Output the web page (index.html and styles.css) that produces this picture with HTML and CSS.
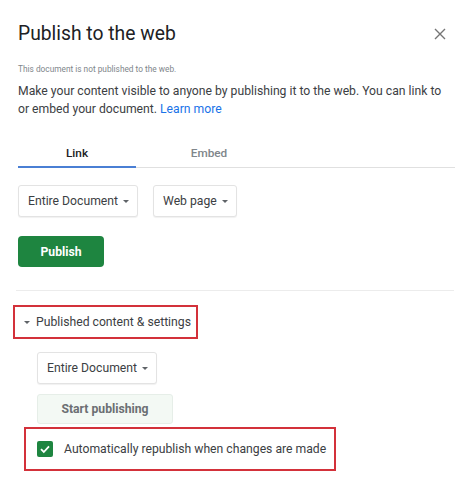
FILE: index.html
```html
<!DOCTYPE html>
<html lang="en">
<head>
<meta charset="utf-8">
<title>Publish to the web</title>
<link rel="stylesheet" href="styles.css">
</head>
<body>
<div class="dialog">
  <div class="header">
    <h1 class="title">Publish to the web</h1>
    <button class="close" aria-label="Close">
      <svg width="12" height="12" viewBox="0 0 12 12"><path d="M1 1L11 11M11 1L1 11" stroke="#757575" stroke-width="1.4" fill="none"/></svg>
    </button>
  </div>
  <p class="notice">This document is not published to the web.</p>
  <p class="intro">Make your content visible to anyone by publishing it to the web. You can link to or embed your document. <a class="link" href="#">Learn more</a></p>

  <div class="tabs">
    <div class="tab active">Link</div>
    <div class="tab wide">Embed</div>
  </div>

  <div class="selects">
    <div class="select">Entire Document <span class="caret"></span></div>
    <div class="select">Web page <span class="caret"></span></div>
  </div>

  <button class="publish">Publish</button>

  <div class="divider"></div>

  <div class="section-toggle"><span class="caret small"></span>Published content &amp; settings</div>

  <div class="settings">
    <div class="select">Entire Document <span class="caret"></span></div>
    <button class="start">Start publishing</button>
  </div>

  <div class="auto">
    <span class="checkbox">
      <svg width="12" height="12" viewBox="0 0 12 12"><path d="M2 6.2L4.8 9L10 3.4" stroke="#fff" stroke-width="1.8" fill="none"/></svg>
    </span>
    <span class="auto-label">Automatically republish when changes are made</span>
  </div>
</div>
</body>
</html>
```

FILE: styles.css
```css
* { box-sizing: border-box; }
body {
  margin: 0;
  background: #fff;
  font-family: Roboto, "Liberation Sans", Arial, sans-serif;
  color: #3c4043;
}
.dialog {
  width: 474px;
  padding: 22px 19px 0 18px;
}
.header {
  display: flex;
  justify-content: space-between;
  align-items: center;
  height: 24px;
}
.title {
  margin: 0;
  font-size: 19.3px;
  font-weight: 400;
  color: #202124;
  line-height: 24px;
}
.close {
  border: 0;
  background: none;
  padding: 0;
  margin-right: 9px;
  width: 12px;
  height: 12px;
  display: flex;
}
.notice {
  margin: 18px 0 0;
  font-size: 8.3px;
  line-height: 10px;
  color: #80868b;
}
.intro {
  margin: 8px 0 0;
  font-size: 12.2px;
  line-height: 18px;
  color: #3c4043;
}
.link { color: #1a73e8; text-decoration: none; }
.tabs {
  display: flex;
  margin-top: 21px;
  border-bottom: 1px solid #e0e0e0;
  width: 437px;
}
.tab {
  width: 118px;
  text-align: center;
  font-size: 11.8px;
  font-weight: 500;
  color: #80868b;
  padding: 7px 0 6px;
  line-height: 14px;
  margin-bottom: -1px;
  border-bottom: 2px solid transparent;
}
.tab.wide { width: 146px; }
.tab.active {
  color: #202124;
  border-bottom-color: #4a7fd4;
}
.selects {
  display: flex;
  gap: 15px;
  margin-top: 17px;
}
.select {
  display: inline-flex;
  align-items: center;
  height: 32px;
  padding: 0 8px 0 9px;
  border: 1px solid #e3e3e3;
  border-radius: 3px;
  box-shadow: 0 1px 1px rgba(0,0,0,0.06);
  font-size: 12.2px;
  color: #3c4043;
  background: #fff;
}
.caret {
  display: inline-block;
  width: 0;
  height: 0;
  border-left: 3.5px solid transparent;
  border-right: 3.5px solid transparent;
  border-top: 3.5px solid #5f6368;
  margin-left: 5px;
}
.caret.small {
  margin: 0 6px 0 3px;
  border-left-width: 3px;
  border-right-width: 3px;
  border-top-width: 3px;
}
.publish {
  display: block;
  margin-top: 19px;
  width: 86px;
  height: 31px;
  border: 0;
  border-radius: 4px;
  background: #1e8540;
  color: #fff;
  font-family: inherit;
  font-size: 12.2px;
  font-weight: 700;
}
.divider {
  margin-top: 23px;
  height: 1px;
  background: #ececec;
  width: 438px;
  margin-left: -2px;
}
.section-toggle {
  display: inline-flex;
  align-items: center;
  margin-top: 14px;
  margin-left: -5px;
  height: 34px;
  padding: 0 5px 0 6px;
  border: 2px solid #d3313a;
  font-size: 12.2px;
  color: #3c4043;
}
.settings {
  display: flex;
  flex-direction: column;
  align-items: flex-start;
  gap: 10px;
  margin: 13px 0 0 19px;
}
.start {
  width: 136px;
  height: 30px;
  border: 1px solid #e6eee8;
  border-radius: 3px;
  background: #f3f9f4;
  color: #6b6f73;
  font-family: inherit;
  font-size: 12.2px;
  font-weight: 700;
}
.auto {
  display: flex;
  align-items: center;
  margin: 3px 0 0 6px;
  width: 312px;
  height: 44px;
  border: 2px solid #d3313a;
  padding-left: 11px;
}
.checkbox {
  flex: none;
  width: 16px;
  height: 16px;
  border-radius: 2px;
  background: #1e8540;
  display: flex;
  align-items: center;
  justify-content: center;
  margin-right: 11px;
}
.auto-label {
  font-size: 12.2px;
  color: #3c4043;
  white-space: nowrap;
}
```
